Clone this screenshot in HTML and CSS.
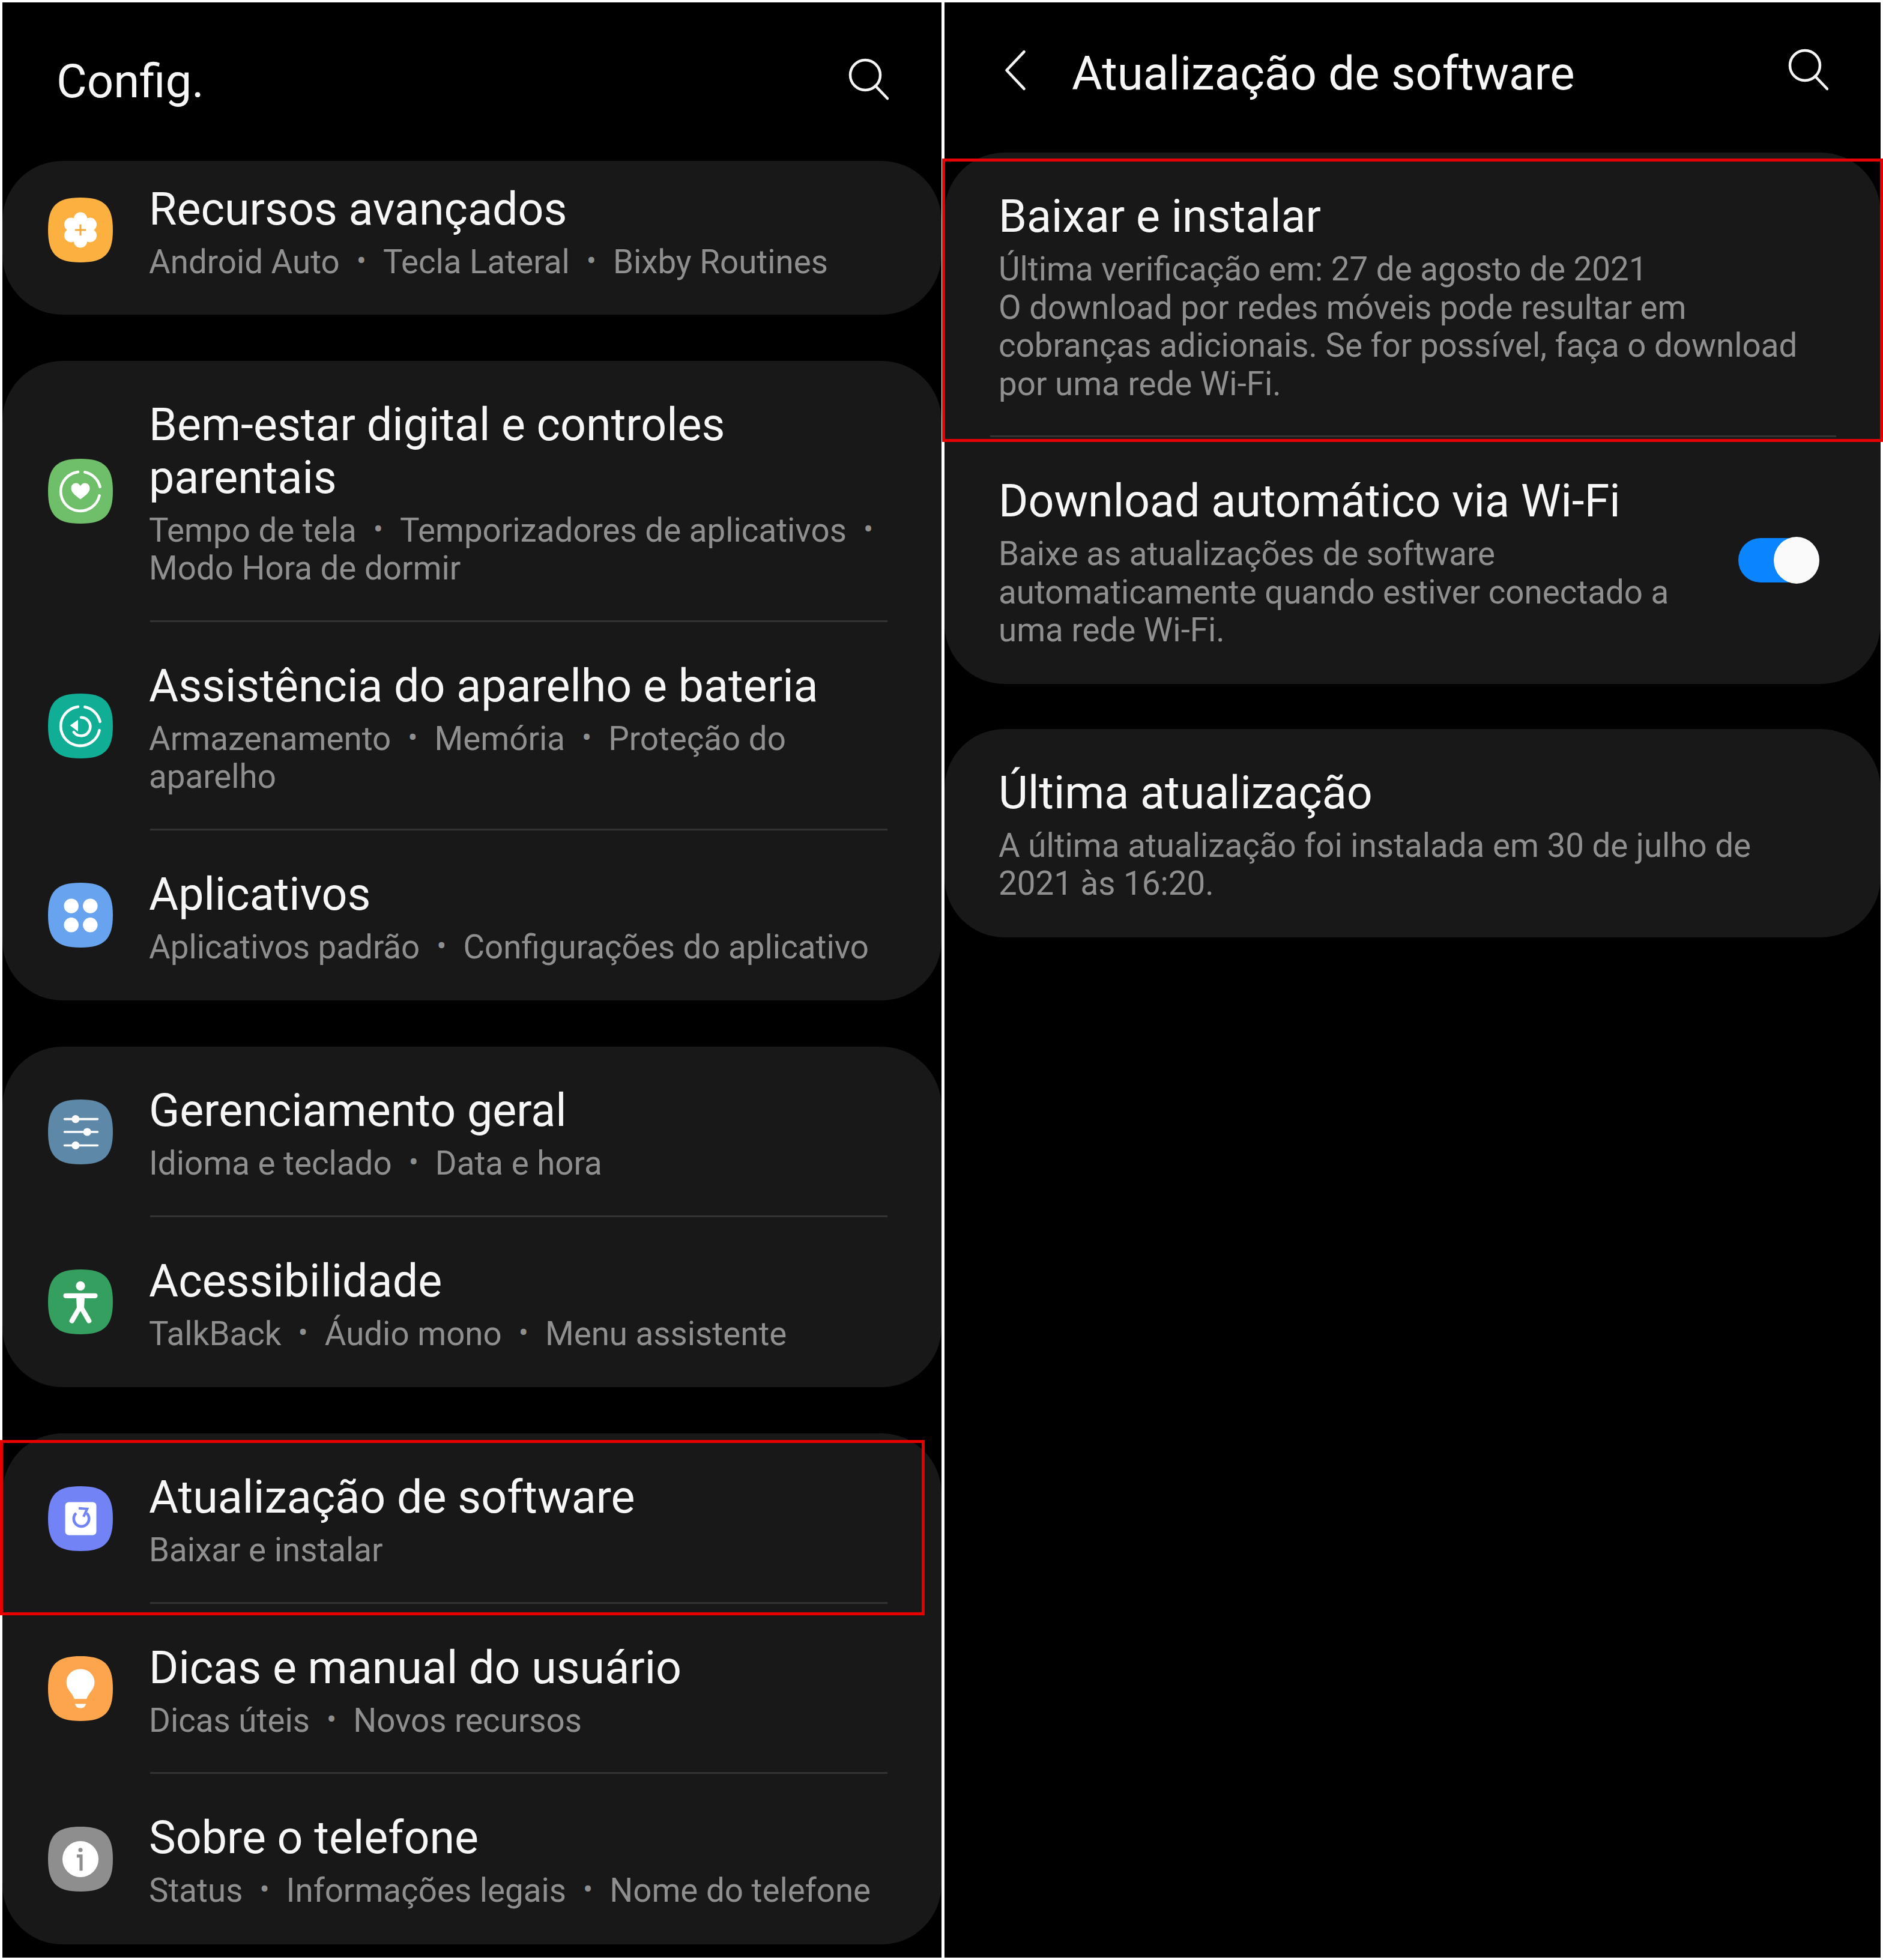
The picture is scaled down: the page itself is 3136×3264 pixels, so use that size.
FILE: index.html
```html
<!DOCTYPE html>
<html lang="pt-BR">
<head>
<meta charset="utf-8">
<title>Config.</title>
<link rel="stylesheet" href="styles.css">
</head>
<body>
<svg class="defs" width="0" height="0" aria-hidden="true"><defs><path id="sq" d="M53 0C92 0 106 14 106 53C106 92 92 106 53 106C14 106 0 92 0 53C0 14 14 0 53 0Z"/></defs></svg>
<main class="screen">
  <section class="panel panel-main">
    <header class="head head-main">
      <h1 class="head-title config">Config.</h1>
      <svg class="search" viewBox="0 0 68 70"><circle cx="29" cy="28" r="25"/><path d="M46 46L66 67"/></svg>
    </header>
    <div class="cards">
      <div class="card">
        <div class="row row-short">
          <svg class="ico" viewBox="0 0 106 106"><use href="#sq" fill="#fbb040"/><g fill="#fff"><circle cx="53" cy="35" r="11"/><circle cx="53" cy="71" r="11"/><circle cx="37.5" cy="44" r="11"/><circle cx="68.5" cy="44" r="11"/><circle cx="37.5" cy="62" r="11"/><circle cx="68.5" cy="62" r="11"/><circle cx="53" cy="53" r="16"/></g><path d="M53 44V62M44 53H62" stroke="#f3a93c" stroke-width="3" fill="none"/></svg>
          <div class="txt"><div class="t">Recursos avançados</div><div class="s">Android Auto<i class="dot">•</i>Tecla Lateral<i class="dot">•</i>Bixby Routines</div></div>
        </div>
      </div>
      <div class="card">
        <div class="row">
          <svg class="ico" viewBox="0 0 106 106"><use href="#sq" fill="#6fbe69"/><g fill="none" stroke="#fff" stroke-width="4.5" stroke-linecap="round"><path d="M49 21.5A32 32 0 1 0 84 60"/><path d="M60 21.8A32 32 0 0 1 85 46"/></g><path d="M53 68C44 61 37 56 37 49C37 43 41 40 45 40C49 40 51 42 53 45C55 42 57 40 61 40C65 40 69 43 69 49C69 56 62 61 53 68Z" fill="#fff" transform="translate(2.65 1.7) scale(.95)"/></svg>
          <div class="txt"><div class="t">Bem-estar digital e controles parentais</div><div class="s">Tempo de tela<i class="dot">•</i>Temporizadores de aplicativos<i class="dot">•</i><br>Modo Hora de dormir</div></div>
        </div>
        <div class="row">
          <svg class="ico" viewBox="0 0 106 106"><use href="#sq" fill="#0fae95"/><g fill="none" stroke="#fff" stroke-width="4.5" stroke-linecap="round"><path d="M49 21.5A32 32 0 1 0 84 60"/><path d="M60 21.8A32 32 0 0 1 85 46"/><path d="M54 39A15 15 0 1 1 42 63"/></g><path d="M36 52L49 43L49 62Z" fill="#fff"/></svg>
          <div class="txt"><div class="t">Assistência do aparelho e bateria</div><div class="s">Armazenamento<i class="dot">•</i>Memória<i class="dot">•</i>Proteção do<br>aparelho</div></div>
        </div>
        <div class="row">
          <svg class="ico" viewBox="0 0 106 106"><use href="#sq" fill="#67a3ee"/><g fill="#fff"><circle cx="38" cy="38" r="12"/><circle cx="69" cy="38" r="12"/><circle cx="38" cy="69" r="12"/><circle cx="69" cy="69" r="12"/></g></svg>
          <div class="txt"><div class="t">Aplicativos</div><div class="s">Aplicativos padrão<i class="dot">•</i>Configurações do aplicativo</div></div>
        </div>
      </div>
      <div class="card">
        <div class="row">
          <svg class="ico" viewBox="0 0 106 106"><use href="#sq" fill="#5e88a8"/><g stroke="#fff" stroke-width="3.5" stroke-linecap="round"><path d="M27 32H81M27 53H81M27 75H81"/></g><g fill="#fff"><circle cx="45" cy="32" r="6.5"/><circle cx="64" cy="53" r="6.5"/><circle cx="45" cy="75" r="6.5"/></g></svg>
          <div class="txt"><div class="t">Gerenciamento geral</div><div class="s">Idioma e teclado<i class="dot">•</i>Data e hora</div></div>
        </div>
        <div class="row">
          <svg class="ico" viewBox="0 0 106 106"><use href="#sq" fill="#359f5f"/><circle cx="53" cy="27" r="7.5" fill="#fff"/><path d="M29 43H77M53 43V62M53 60L39 84M53 60L67 84" stroke="#fff" stroke-width="8" stroke-linecap="round" stroke-linejoin="round" fill="none"/><path d="M46 43H60L59 62H47Z" fill="#fff"/></svg>
          <div class="txt"><div class="t">Acessibilidade</div><div class="s">TalkBack<i class="dot">•</i>Áudio mono<i class="dot">•</i>Menu assistente</div></div>
        </div>
      </div>
      <div class="card">
        <div class="row">
          <svg class="ico" viewBox="0 0 106 106"><use href="#sq" fill="#7283f5"/><rect x="28" y="26" width="51" height="54" rx="6" fill="#fff"/><path d="M46 44A12.5 12.5 0 1 0 63 44" fill="none" stroke="#7283f5" stroke-width="4.5"/><path d="M50 36L64 37L58 50" fill="none" stroke="#7283f5" stroke-width="4"/></svg>
          <div class="txt"><div class="t">Atualização de software</div><div class="s">Baixar e instalar</div></div>
        </div>
        <div class="row">
          <svg class="ico" viewBox="0 0 106 106"><use href="#sq" fill="#fda54c"/><path d="M53 21C66 21 76 30 76 43C76 55 66 60 63 70H43C40 60 30 55 30 43C30 30 40 21 53 21Z" fill="#fff"/><path d="M44 78H62C61 83 57 85 53 85C49 85 45 83 44 78Z" fill="#fff"/></svg>
          <div class="txt"><div class="t">Dicas e manual do usuário</div><div class="s">Dicas úteis<i class="dot">•</i>Novos recursos</div></div>
        </div>
        <div class="row">
          <svg class="ico" viewBox="0 0 106 106"><use href="#sq" fill="#8e8e8e"/><circle cx="53" cy="53" r="29.5" fill="#fff"/><circle cx="53" cy="38" r="3.5" fill="#8e8e8e"/><path d="M47 48H54V72" fill="none" stroke="#8e8e8e" stroke-width="5"/></svg>
          <div class="txt"><div class="t">Sobre o telefone</div><div class="s">Status<i class="dot">•</i>Informações legais<i class="dot">•</i>Nome do telefone</div></div>
        </div>
      </div>
    </div>
    <div class="mark mark-left"></div>
  </section>
  <section class="panel panel-sub">
    <header class="head head-sub">
      <svg class="back" viewBox="0 0 44 76"><path d="M38 4L6 38L38 72"/></svg>
      <h1 class="head-title">Atualização de software</h1>
      <svg class="search" viewBox="0 0 68 70"><circle cx="29" cy="28" r="25"/><path d="M46 46L66 67"/></svg>
    </header>
    <div class="cards">
      <div class="card">
        <div class="row row-plain">
          <div class="txt"><div class="t">Baixar e instalar</div><div class="s">Última verificação em: 27 de agosto de 2021<br>O download por redes móveis pode resultar em<br>cobranças adicionais. Se for possível, faça o download<br>por uma rede Wi-Fi.</div></div>
        </div>
        <div class="row row-plain">
          <div class="txt"><div class="t">Download automático via Wi-Fi</div><div class="s">Baixe as atualizações de software<br>automaticamente quando estiver conectado a<br>uma rede Wi-Fi.</div></div>
          <div class="switch" role="switch" aria-checked="true"><span class="knob"></span></div>
        </div>
      </div>
      <div class="card">
        <div class="row row-plain">
          <div class="txt"><div class="t">Última atualização</div><div class="s">A última atualização foi instalada em 30 de julho de<br>2021 às 16:20.</div></div>
        </div>
      </div>
    </div>
    <div class="mark mark-right"></div>
  </section>
</main>
</body>
</html>
```
FILE: styles.css
```css
* { box-sizing: border-box; }
html, body { margin: 0; padding: 0; }
body { width: 3136px; height: 3264px; background: #fff; font-family: Roboto, "Liberation Sans", sans-serif; overflow: hidden; }
.defs { position: absolute; }
.screen { display: grid; grid-template-columns: 1564px 1559px; column-gap: 5px; padding: 4px 4px 4px 4px; height: 3264px; }
.panel { background: #000; position: relative; min-width: 0; }
.head { display: flex; align-items: center; }
.head-main { height: 264px; padding: 0 88px 0 90px; justify-content: space-between; }
.head-sub { height: 250px; padding: 0 87px 0 98px; }
.head-title { margin: 0; font-weight: 400; font-size: 78px; line-height: 88px; color: #f6f6f6; flex: 1; position: relative; top: -6px; }
.config { top: 0; flex: none; }
.search { width: 68px; height: 70px; fill: none; stroke: #f4f4f4; stroke-width: 4.5; stroke-linecap: round; }
.head-main .search { margin-top: -8px; }
.head-sub .search { margin-top: -26px; }
.back { width: 40px; height: 70px; margin-right: 74px; fill: none; stroke: #f4f4f4; stroke-width: 5; stroke-linecap: round; stroke-linejoin: round; margin-top: -24px; }
.cards { display: flex; flex-direction: column; }
.panel-main .cards { gap: 77px; }
.panel-sub .cards { gap: 75px; }
.card { background: #181818; border-radius: 100px; overflow: hidden; }
.row { display: flex; align-items: center; position: relative; padding: 62px 60px 57px 244px; }
.row-short { padding-top: 36px; padding-bottom: 55px; }
.row-plain { padding-left: 90px; }
.row + .row::before { content: ""; position: absolute; top: -3px; left: 246px; right: 90px; height: 3px; background: #333; }
.row-plain + .row-plain::before { left: 76px; right: 74px; }
.ico { position: absolute; left: 76px; width: 108px; height: 108px; top: 50%; margin-top: -54px; }
.row-short .ico { margin-top: -67px; }
.txt { flex: 1; min-width: 0; }
.t { font-size: 75.4px; line-height: 88px; color: #f6f6f6; }
.s { font-size: 54.7px; line-height: 63.5px; color: #8f8f8f; margin-top: 13px; }
.dot { font-style: normal; margin: 0 28px; font-size: 48px; line-height: 0; vertical-align: 4px; }
.switch { width: 135px; height: 74px; border-radius: 37px; background: #0a84ff; position: relative; flex: none; margin: -6px 42px 0 0; }
.knob { position: absolute; right: 0; top: -2px; width: 76px; height: 78px; border-radius: 50%; background: #fafafa; }
.mark { position: absolute; border: 5px solid #e60000; pointer-events: none; }
.mark-left { left: -4px; top: 2394px; width: 1540px; height: 292px; }
.mark-right { left: -4px; top: 260px; width: 1567px; height: 472px; }
```
